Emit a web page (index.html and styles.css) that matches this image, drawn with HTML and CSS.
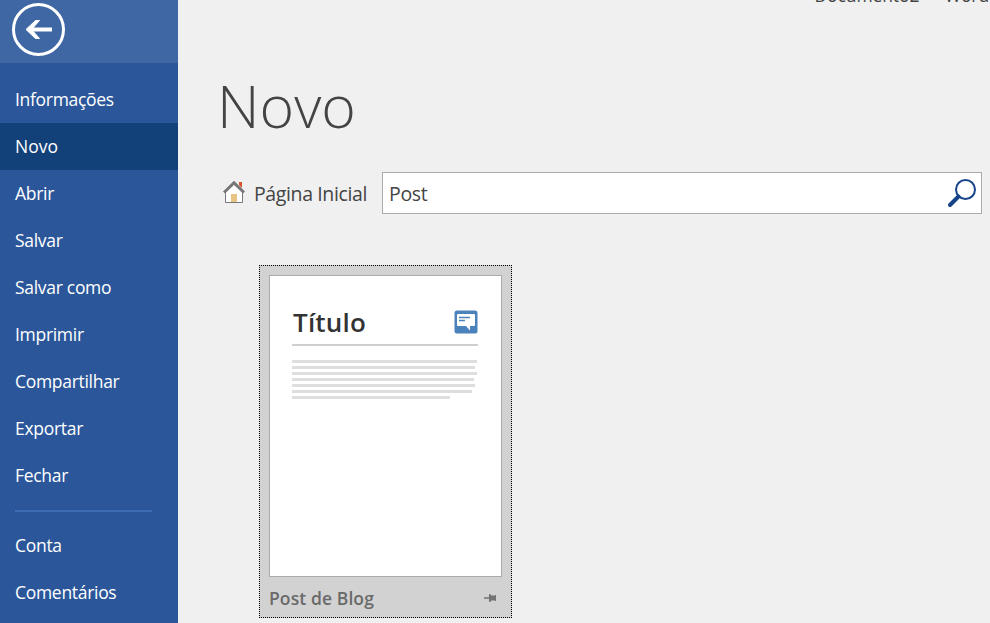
FILE: index.html
```
<!DOCTYPE html>
<html lang="pt-BR">
<head>
  <meta charset="UTF-8">
  <meta name="viewport" content="width=device-width, initial-scale=1">
  <title>Documento2 - Word</title>
  <link rel="stylesheet" href="styles.css">
</head>
<body>
  <div class="backstage">
    <!-- Sidebar -->
    <aside class="sidebar">
      <div class="sidebar-top">
        <a href="#" class="back-button" aria-label="Voltar">
          <svg width="54" height="54" viewBox="0 0 54 54" fill="none" stroke="#fff">
            <circle cx="26.5" cy="26.5" r="25" stroke-width="3"/>
            <path d="M40 26.5H16" stroke-width="4"/>
            <path d="M23.5 17.500H27.500L19.500 26.500L27.500 35.500H23.500L14 26.500Z" fill="#fff" stroke-width="1"/>
          </svg>
        </a>
      </div>
      <nav class="menu">
        <a href="#" class="menu-item">Informações</a>
        <a href="#" class="menu-item active">Novo</a>
        <a href="#" class="menu-item">Abrir</a>
        <a href="#" class="menu-item">Salvar</a>
        <a href="#" class="menu-item">Salvar como</a>
        <a href="#" class="menu-item">Imprimir</a>
        <a href="#" class="menu-item">Compartilhar</a>
        <a href="#" class="menu-item">Exportar</a>
        <a href="#" class="menu-item">Fechar</a>
        <hr class="menu-divider">
        <a href="#" class="menu-item">Conta</a>
        <a href="#" class="menu-item">Comentários</a>
      </nav>
    </aside>

    <!-- Main content -->
    <main class="content">
      <div class="window-title"><span>Documento2</span><span>-</span><span>Word</span></div>
      <h1>Novo</h1>

      <div class="search-row">
        <a href="#" class="home-link">
          <svg width="22" height="24" viewBox="0 0 22 24">
            <path d="M16 1h3v6l-3-3z" fill="#d9532f"/>
            <path d="M2.500 10L11 2.500L19.500 10V21.500H2.500Z" fill="#fff" stroke="#777" stroke-width="1"/>
            <path d="M8 13h6v8H8z" fill="#eac282"/>
            <path d="M1 11.500L11 1.800L21 11.500" fill="none" stroke="#777" stroke-width="3"/>
          </svg>
          <span>Página Inicial</span>
        </a>
        <div class="search-box">
          <span class="search-text">Post</span>
          <svg width="30" height="30" viewBox="0 0 30 30" fill="none" stroke="#174489">
            <circle cx="18.500" cy="11.500" r="9.500" stroke-width="2"/>
            <path d="M11.500 18.500L3 27" stroke-width="4" stroke-linecap="round"/>
          </svg>
        </div>
      </div>

      <!-- Template result -->
      <div class="template-card">
        <div class="template-preview">
          <div class="preview-header">
            <span class="preview-title">Título</span>
            <svg width="24" height="24" viewBox="0 0 24 24">
              <rect x="0.500" y="0.500" width="23" height="23" rx="2.500" fill="#4c82bb"/>
              <path d="M4 4h16q1 0 1 1v10q0 1-1 1h-4v4.500L12 16H4q-1 0-1-1V5q0-1 1-1z" fill="#fff"/>
              <path d="M5 7.500h11M5 10.500h6" stroke="#4c82bb" stroke-width="1.500"/>
            </svg>
          </div>
          <div class="preview-line w1"></div>
          <div class="preview-line w2"></div>
          <div class="preview-line w1"></div>
          <div class="preview-line w3"></div>
          <div class="preview-line w2"></div>
          <div class="preview-line w4"></div>
          <div class="preview-line w5"></div>
        </div>
        <div class="template-footer">
          <span class="template-name">Post de Blog</span>
          <svg width="12" height="8" viewBox="0 0 12 8" fill="#747474">
            <path d="M0 3.200h5V0h1l1.500 1.500H11V1h1v6h-1v-.5H7.500L6 8H5V4.800H0z"/>
          </svg>
        </div>
      </div>
    </main>
  </div>
</body>
</html>
```
FILE: styles.css
```
* {
  box-sizing: border-box;
}
body {
  margin: 0;
  font-family: "Open Sans", "Noto Sans", sans-serif;
  background: #f0f0f0;
  color: #444;
}
a {
  color: inherit;
  text-decoration: none;
}
svg {
  display: block;
  flex-shrink: 0;
}
.backstage {
  display: flex;
  height: 623px;
  overflow: hidden;
}
/* Sidebar */
.sidebar {
  width: 178px;
  flex-shrink: 0;
  background: #2b579a;
  color: #fff;
}
.sidebar-top {
  height: 63px;
  padding: 3px 12px;
  background: #3e67a4;
}
.back-button {
  display: block;
  width: 54px;
}
.menu {
  padding-top: 13px;
}
.menu-item {
  display: block;
  height: 47px;
  padding-left: 15px;
  font-size: 17.5px;
  line-height: 47px;
  letter-spacing: -0.3px;
  white-space: nowrap;
}
.menu-item.active {
  background: #124078;
  letter-spacing: 0;
}
.menu-divider {
  width: 137px;
  height: 2px;
  margin: 11px 0 10px 15px;
  border: none;
  background: #3f6db5;
}
/* Main content */
.content {
  flex: 1;
  padding: 0 8px 0 42px;
}
.window-title {
  display: flex;
  justify-content: flex-end;
  gap: 10px;
  height: 20px;
  margin: -15px -7px 0 0;
  font-size: 17.5px;
  line-height: 20px;
  letter-spacing: -0.1px;
}
h1 {
  height: 80px;
  margin: 60px 0 0 -3px;
  font-size: 59px;
  font-weight: 300;
  line-height: 80px;
}
.search-row {
  display: flex;
  align-items: center;
  height: 42px;
  margin-top: 27px;
}
.home-link {
  display: flex;
  align-items: center;
  gap: 9px;
  width: 162px;
  padding-left: 3px;
  font-size: 19.5px;
  letter-spacing: -0.38px;
  white-space: nowrap;
}
.search-box {
  display: flex;
  flex: 1;
  align-items: center;
  justify-content: space-between;
  height: 42px;
  padding: 0 4px 0 6px;
  border: 1px solid #ababab;
  background: #fff;
}
.search-text {
  font-size: 19.5px;
  letter-spacing: -0.3px;
}
/* Template result */
.template-card {
  width: 253px;
  height: 353px;
  margin: 51px 0 0 39px;
  padding: 9px;
  border: 1px dotted #000;
  background: #d2d2d2;
}
.template-preview {
  width: 233px;
  height: 302px;
  padding: 30px 23px 0 22px;
  border: 1px solid #ababab;
  background: #fff;
}
.preview-header {
  display: flex;
  align-items: center;
  justify-content: space-between;
  height: 40px;
  margin-bottom: 14px;
  padding: 0 0 7px 1px;
  border-bottom: 2px solid #cfcfcf;
}
.preview-title {
  font-size: 26px;
  font-weight: 600;
  letter-spacing: 0.2px;
  color: #333;
}
.preview-line {
  height: 3px;
  margin-bottom: 3px;
  background: #dedede;
}
.w1 {
  width: 185px;
}
.w2 {
  width: 183px;
}
.w3 {
  width: 182px;
}
.w4 {
  width: 180px;
}
.w5 {
  width: 158px;
}
.template-footer {
  display: flex;
  align-items: center;
  justify-content: space-between;
  height: 42px;
  padding-right: 6px;
}
.template-name {
  font-size: 17.5px;
  font-weight: 600;
  letter-spacing: 0.1px;
  color: #6a6a6a;
}
```
